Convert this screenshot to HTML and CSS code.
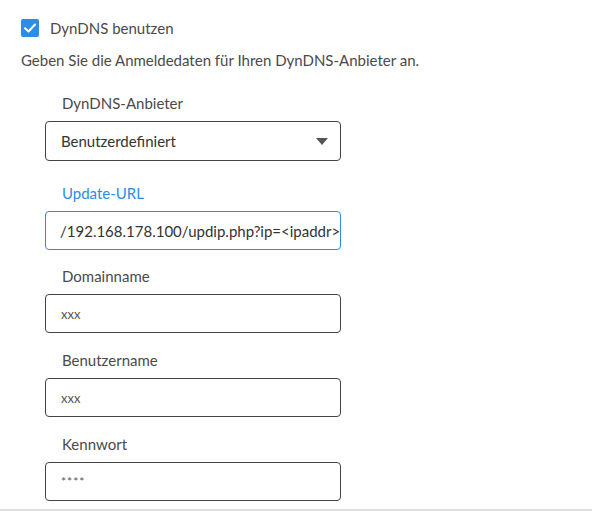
FILE: index.html
```html
<!DOCTYPE html>
<html lang="de">
  <head>
    <meta charset="UTF-8" />
    <title>DynDNS</title>
    <link rel="stylesheet" href="styles.css">
  </head>
  <body>
    <div class="panel">
      <label class="check-row">
        <span class="checkbox">
          <svg width="18" height="18" viewBox="0 0 18 18">
            <path d="M4 9.2 L7.5 12.5 L14 5.5" fill="none" stroke="#fff" stroke-width="2" stroke-linecap="round" stroke-linejoin="round"/>
          </svg>
        </span>
        <span>DynDNS benutzen</span>
      </label>
      <p class="desc">Geben Sie die Anmeldedaten für Ihren DynDNS-Anbieter an.</p>

      <div class="fields">
        <div class="field field-select">
          <div class="field-label">DynDNS-Anbieter</div>
          <div class="input select">
            <span>Benutzerdefiniert</span>
            <svg width="12" height="7" viewBox="0 0 12 7">
              <path d="M0 0 H12 L6 7 Z" fill="#555"/>
            </svg>
          </div>
        </div>

        <div class="field field-url">
          <div class="field-label active">Update-URL</div>
          <div class="input focused">
            <span>/192.168.178.100/updip.php?ip=&lt;ipaddr&gt;</span><span class="caret"></span>
          </div>
        </div>

        <div class="field">
          <div class="field-label">Domainname</div>
          <div class="input"><span class="small">xxx</span></div>
        </div>

        <div class="field">
          <div class="field-label">Benutzername</div>
          <div class="input"><span class="small">xxx</span></div>
        </div>

        <div class="field">
          <div class="field-label">Kennwort</div>
          <div class="input"><span class="small stars">****</span></div>
        </div>
      </div>
    </div>
    <div class="divider"></div>
  </body>
</html>
```

FILE: styles.css
```css
body {
  margin: 0;
  font-family: "Lato", "Open Sans", sans-serif;
  color: #4a4a4a;
  background-color: #fff;
}
.panel {
  padding: 19px 0 0 21px;
  height: 490px;
  box-sizing: border-box;
}
.check-row {
  display: flex;
  align-items: center;
  gap: 11px;
  height: 18px;
  font-size: 15px;
}
.checkbox {
  width: 18px;
  height: 18px;
  border-radius: 2px;
  background-color: #2b8de3;
  display: flex;
}
.desc {
  margin: 13px 0 0;
  font-size: 15px;
  line-height: 20px;
}
.fields {
  margin-left: 24px;
  width: 296px;
  margin-top: 23px;
}
.field {
  margin-bottom: 17px;
}
.field-select {
  margin-bottom: 22px;
}
.field-url {
  margin-bottom: 16px;
}
.field-label {
  font-size: 15px;
  line-height: 20px;
  padding-left: 17px;
  margin-bottom: 8px;
  color: #4a4a4a;
}
.field-label.active {
  color: #2b8de3;
}
.input {
  height: 39px;
  box-sizing: border-box;
  border: 1px solid #444;
  border-radius: 4px;
  padding: 0 15px;
  display: flex;
  align-items: center;
  font-size: 15px;
  color: #333;
  overflow: hidden;
  white-space: nowrap;
}
.select {
  height: 40px;
  justify-content: space-between;
  padding-right: 12px;
}
.focused {
  border-color: #2b8de3;
  padding-left: 14px;
  padding-right: 4px;
}
.caret {
  flex: none;
  width: 1px;
  height: 22px;
  background-color: #2b8de3;
  margin-left: 1px;
}
.small {
  font-size: 13px;
  color: #555;
}
.stars {
  letter-spacing: 1px;
  font-size: 12px;
}
.divider {
  border-top: 2px solid #dedede;
  margin-top: 19px;
}
```
